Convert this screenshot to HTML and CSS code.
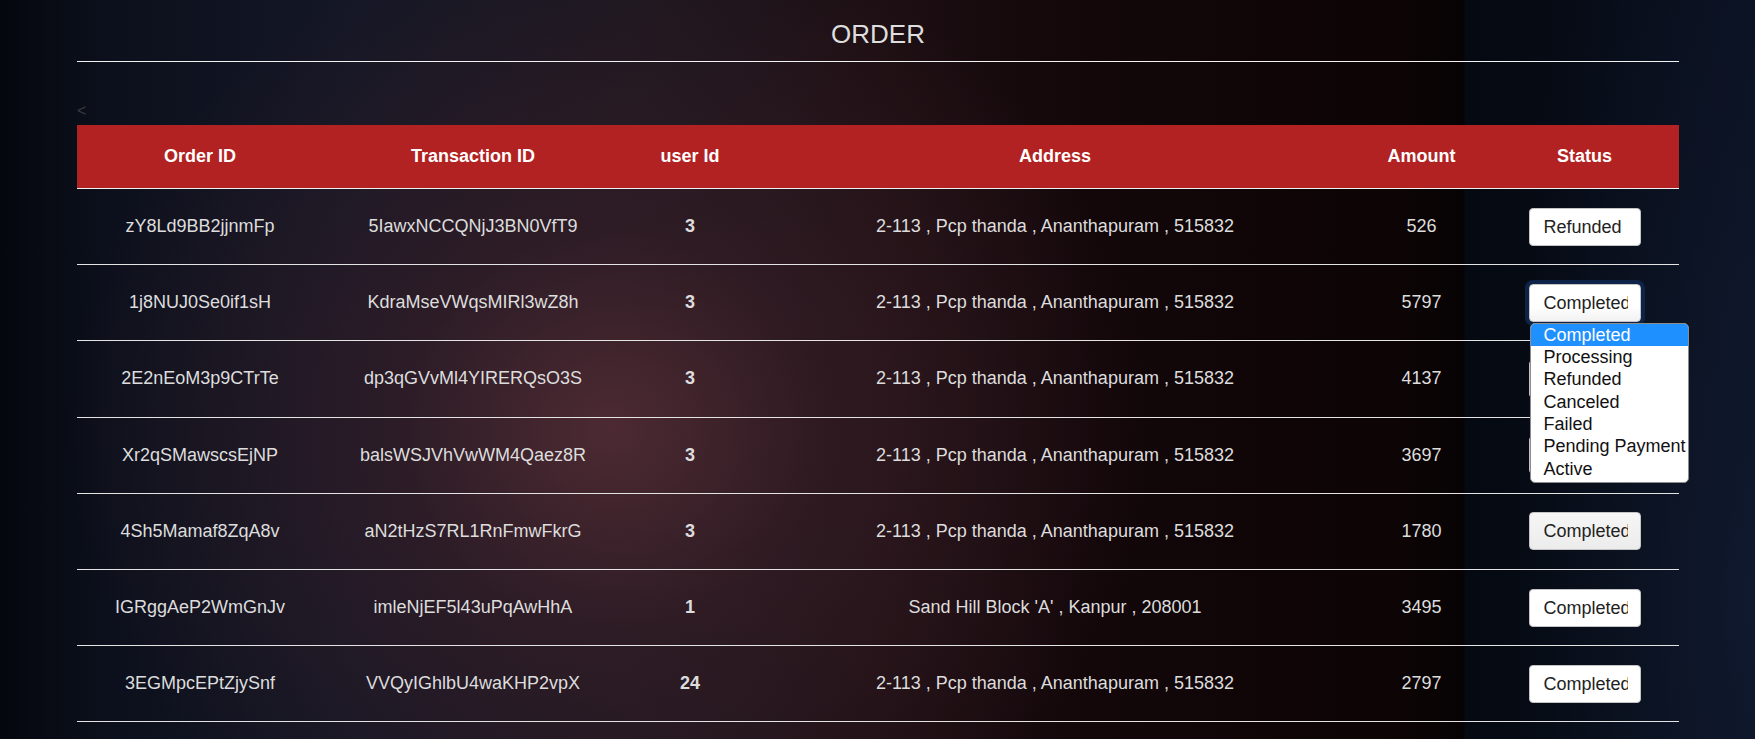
FILE: index.html
```html
<!DOCTYPE html>
<html lang="en">
<head>
<meta charset="utf-8">
<title>Order</title>
<link rel="stylesheet" href="styles.css">
</head>
<body>
<div class="page">
  <h1 class="title">ORDER</h1>
  <div class="divider"></div>
  <div class="back">&lt;</div>
  <table class="orders">
    <colgroup>
      <col class="c-order"><col class="c-txn"><col class="c-user"><col class="c-addr"><col class="c-amt"><col class="c-status">
    </colgroup>
    <thead>
      <tr><th>Order ID</th><th>Transaction ID</th><th>user Id</th><th>Address</th><th>Amount</th><th>Status</th></tr>
    </thead>
    <tbody>
      <tr><td>zY8Ld9BB2jjnmFp</td><td>5IawxNCCQNjJ3BN0VfT9</td><td class="uid">3</td><td>2-113 , Pcp thanda , Ananthapuram , 515832</td><td>526</td>
        <td><div class="sel-wrap"><div class="sel"><span class="sel-text">Refunded</span></div></div></td></tr>
      <tr><td>1j8NUJ0Se0if1sH</td><td>KdraMseVWqsMIRl3wZ8h</td><td class="uid">3</td><td>2-113 , Pcp thanda , Ananthapuram , 515832</td><td>5797</td>
        <td><div class="sel-wrap"><div class="sel sel-focus"><span class="sel-text">Completed</span></div>
          <ul class="menu">
            <li class="opt opt-active">Completed</li>
            <li class="opt">Processing</li>
            <li class="opt">Refunded</li>
            <li class="opt">Canceled</li>
            <li class="opt">Failed</li>
            <li class="opt">Pending Payment</li>
            <li class="opt">Active</li>
          </ul></div></td></tr>
      <tr><td>2E2nEoM3p9CTrTe</td><td>dp3qGVvMl4YIRERQsO3S</td><td class="uid">3</td><td>2-113 , Pcp thanda , Ananthapuram , 515832</td><td>4137</td>
        <td><div class="sel-wrap"><div class="sel"><span class="sel-text">Completed</span></div></div></td></tr>
      <tr><td>Xr2qSMawscsEjNP</td><td>balsWSJVhVwWM4Qaez8R</td><td class="uid">3</td><td>2-113 , Pcp thanda , Ananthapuram , 515832</td><td>3697</td>
        <td><div class="sel-wrap"><div class="sel"><span class="sel-text">Completed</span></div></div></td></tr>
      <tr><td>4Sh5Mamaf8ZqA8v</td><td>aN2tHzS7RL1RnFmwFkrG</td><td class="uid">3</td><td>2-113 , Pcp thanda , Ananthapuram , 515832</td><td>1780</td>
        <td><div class="sel-wrap"><div class="sel sel-hover"><span class="sel-text">Completed</span></div></div></td></tr>
      <tr><td>IGRggAeP2WmGnJv</td><td>imleNjEF5l43uPqAwHhA</td><td class="uid">1</td><td>Sand Hill Block 'A' , Kanpur , 208001</td><td>3495</td>
        <td><div class="sel-wrap"><div class="sel"><span class="sel-text">Completed</span></div></div></td></tr>
      <tr><td>3EGMpcEPtZjySnf</td><td>VVQyIGhlbU4waKHP2vpX</td><td class="uid">24</td><td>2-113 , Pcp thanda , Ananthapuram , 515832</td><td>2797</td>
        <td><div class="sel-wrap"><div class="sel"><span class="sel-text">Completed</span></div></div></td></tr>
    </tbody>
  </table>
</div>
</body>
</html>
```

FILE: styles.css
```css
html, body {
  margin: 0;
  padding: 0;
}

body {
  min-height: 739px;
  font-family: "Liberation Sans", Arial, sans-serif;
  color: #dcdcdc;
  background-color: #070a13;
  background-image:
    radial-gradient(ellipse 540px 500px at 610px 430px, rgba(82, 44, 52, 0.9) 0%, rgba(58, 31, 40, 0.6) 40%, rgba(30, 16, 22, 0) 100%),
    radial-gradient(ellipse 240px 900px at 1750px 600px, rgba(20, 32, 56, 0.55) 0%, rgba(20, 32, 56, 0) 100%),
    linear-gradient(to right, #04070d 0%, #0c101c 6%, #141726 20%, #1c1720 36%, #1d0f13 50%, #13070a 62%, #0c0405 80%, #070304 83.4%, #050911 83.5%, #070c17 92%, #0a1020 100%);
  background-repeat: no-repeat;
}

.page {
  margin: 0 76px 0 77px;
}

.title {
  margin: 0;
  padding-top: 19px;
  font-size: 26px;
  line-height: 30px;
  font-weight: normal;
  text-align: center;
  color: #dedede;
}

.divider {
  margin-top: 12px;
  border-top: 1px solid #f2f2f2;
}

.back {
  margin-top: 40px;
  font-size: 16px;
  line-height: 18px;
  color: #3a3b40;
}

.orders {
  margin-top: 5px;
  width: 100%;
  table-layout: fixed;
  border-collapse: separate;
  border-spacing: 0;
}

.c-order { width: 246px; }
.c-txn { width: 300px; }
.c-user { width: 134px; }
.c-addr { width: 596px; }
.c-amt { width: 137px; }
.c-status { width: 189px; }

.orders th {
  background: #b22222;
  color: #ffffff;
  font-size: 18px;
  font-weight: bold;
  line-height: 21px;
  padding: 21px 0;
  text-align: center;
  border-bottom: 1px solid #f0f0f0;
}

.orders td {
  height: 75.2px;
  padding: 0;
  text-align: center;
  vertical-align: middle;
  font-size: 18px;
  color: #dddddd;
  border-bottom: 1px solid #e4e4e4;
}

.orders td.uid {
  font-weight: bold;
}

.sel-wrap {
  position: relative;
  width: 112px;
  margin: 0 auto;
}

.sel {
  box-sizing: border-box;
  width: 112px;
  height: 38px;
  padding: 0 12px 0 14px;
  background: #ffffff;
  border: 1px solid #c4c4c4;
  border-radius: 4px;
  color: #222222;
  font-size: 18px;
  line-height: 36px;
  text-align: left;
}

.sel-text {
  display: block;
  overflow: hidden;
  white-space: nowrap;
}

.sel-focus {
  background: linear-gradient(#ffffff 60%, #f2f2f2);
  box-shadow: 0 0 0 4px #0d2347;
}

.sel-hover {
  background: linear-gradient(#f6f6f6, #ececec);
}

.menu {
  position: absolute;
  left: 1px;
  top: 39px;
  z-index: 2;
  box-sizing: border-box;
  width: 159px;
  margin: 0;
  padding: 0 0 2px;
  list-style: none;
  background: #ffffff;
  border: 1px solid #8c8c8c;
  border-radius: 5px;
  overflow: hidden;
  text-align: left;
}

.opt {
  padding-left: 13px;
  font-size: 18px;
  line-height: 22.3px;
  color: #111111;
  white-space: nowrap;
}

.opt-active {
  background: #1e90ff;
  color: #ffffff;
}
```
